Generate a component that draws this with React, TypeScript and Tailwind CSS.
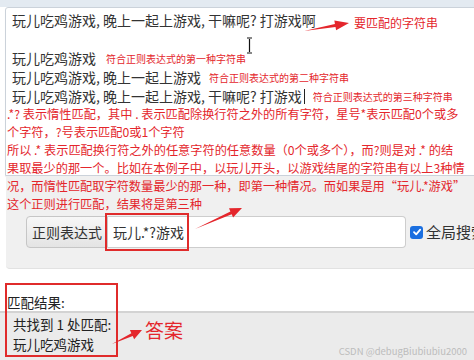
import React from 'react';

const RED = '#e4262c';

type Pt = [number, number];

// tapered annotation arrow, from tail a to tip b
function arrowPoints(a: Pt, b: Pt, head = 12, half = 5, neck = 1.6) {
  const dx = b[0] - a[0];
  const dy = b[1] - a[1];
  const len = Math.hypot(dx, dy);
  const ux = dx / len;
  const uy = dy / len;
  const nx = -uy;
  const ny = ux;
  const bx = b[0] - ux * head;
  const by = b[1] - uy * head;
  const pts: Pt[] = [
    a,
    [bx + nx * neck, by + ny * neck],
    [bx + nx * half, by + ny * half],
    b,
    [bx - nx * half, by - ny * half],
    [bx - nx * neck, by - ny * neck],
  ];
  return pts.map((p) => p.join(',')).join(' ');
}

const arrows: { from: Pt; to: Pt; head: number }[] = [
  { from: [304, 31], to: [349, 23], head: 14 },
  { from: [195, 229], to: [242, 208], head: 12 },
  { from: [112, 344], to: [142, 330], head: 11 },
];

const notes = [
  '.*? 表示惰性匹配，其中 . 表示匹配除换行符之外的所有字符，星号*表示匹配0个或多',
  '个字符，?号表示匹配0或1个字符',
  '所以 .* 表示匹配换行符之外的任意字符的任意数量（0个或多个），而?则是对 .* 的结',
  '果取最少的那一个。比如在本例子中，以玩儿开头，以游戏结尾的字符串有以上3种情',
  '况，而惰性匹配取字符数量最少的那一种，即第一种情况。而如果是用“玩儿.*游戏”',
  '这个正则进行匹配，结果将是第三种',
];

const Label: React.FC<{ className?: string; children: React.ReactNode }> = ({ className = '', children }) => (
  <span className={`text-[10px] leading-none text-[#e4262c] ${className}`}>{children}</span>
);

export default function App() {
  return (
    <div className="relative w-[474px] h-[360px] overflow-hidden bg-white text-[#333] font-['Noto_Sans_CJK_SC','Noto_Sans',sans-serif]">
      <div className="h-[7px] bg-[#e3eaf1]" />

      {/* text area */}
      <div className="ml-[5px] w-[480px] h-[169px] border border-[#cbd2da] rounded-tl-[3px] bg-white pl-[6px] pt-[3px] text-[14px] leading-[19px] shadow-[0_1px_1px_rgba(0,0,0,0.06)]">
        <div className="whitespace-nowrap">玩儿吃鸡游戏, 晚上一起上游戏, 干嘛呢? 打游戏啊</div>
        <div className="h-[19px]" />
        <div className="flex items-center whitespace-nowrap">
          玩儿吃鸡游戏
          <Label className="ml-[10px]">符合正则表达式的第一种字符串</Label>
        </div>
        <div className="flex items-center whitespace-nowrap">
          玩儿吃鸡游戏, 晚上一起上游戏
          <Label className="ml-[8px]">符合正则表达式的第二种字符串</Label>
        </div>
        <div className="flex items-center whitespace-nowrap">
          玩儿吃鸡游戏, 晚上一起上游戏, 干嘛呢? 打游戏
          <span className="ml-[2px] w-px h-[15px] bg-[#222]" />
          <Label className="ml-[8px]">符合正则表达式的第三种字符串</Label>
        </div>
      </div>

      {/* regex panel */}
      <div className="ml-[6px] w-[480px] h-[93px] bg-[#f0f0f0] border-b border-[#e2e2e2] rounded-bl-[4px] pl-[20px] pt-[40px]">
        <div className="flex items-center">
          <div className="shrink-0 whitespace-nowrap h-[32px] px-[5px] flex items-center border border-[#c6c6c6] rounded-l-[4px] bg-gradient-to-b from-[#f7f7f7] to-[#e4e4e4] text-[14px]">
            正则表达式
          </div>
          <div className="shrink-0 h-[32px] w-[298px] flex items-center border border-l-0 border-[#cdcdcd] rounded-r-[4px] bg-white pl-[5px] text-[14px] whitespace-nowrap">
            玩儿.*?游戏
          </div>
          <span className="shrink-0 ml-[4px] w-[13px] h-[13px] rounded-[3px] bg-[#1b6fe0] flex items-center justify-center">
            <svg width="10" height="10" viewBox="0 0 10 10">
              <path d="M2 5.2 L4.2 7.4 L8.2 2.6" fill="none" stroke="#fff" strokeWidth="1.8" strokeLinecap="round" strokeLinejoin="round" />
            </svg>
          </span>
          <span className="shrink-0 ml-[3px] text-[15px] whitespace-nowrap">全局搜索</span>
        </div>
      </div>

      {/* result */}
      <div className="h-[42px] pl-[7px] pt-[23px] text-[13.5px] leading-[20px] text-[#222]">匹配结果:</div>
      <div className="h-[49px] border-t-2 border-[#d3d3d3] bg-[#ebebeb] pl-[13px] pt-[1px] pr-[7px] flex justify-between">
        <div className="text-[13.5px] leading-[20px] text-[#222] whitespace-nowrap">
          <div>共找到 1 处匹配:</div>
          <div>玩儿吃鸡游戏</div>
        </div>
        <div className="self-end pb-[2px] text-[9.5px] text-[#bcbcbc] whitespace-nowrap">CSDN @debugBiubiubiu2000</div>
      </div>

      {/* annotations drawn over the screenshot */}
      <div className="absolute left-[7px] top-[105px] text-[12.2px] leading-[18px] text-[#e4262c] whitespace-nowrap">
        {notes.map((n, i) => (
          <div key={i}>{n}</div>
        ))}
      </div>
      <div className="absolute left-[354px] top-[14px] text-[12px] leading-[18px] text-[#e4262c]">要匹配的字符串</div>
      <div className="absolute left-[105px] top-[213px] w-[84px] h-[38px] border-2 border-[#e02b2b]" />
      <div className="absolute left-[5px] top-[283px] w-[113px] h-[74px] border-2 border-[#e02b2b]" />
      <div className="absolute left-[145px] top-[318px] text-[19px] leading-[24px] text-[#e4262c]">答案</div>

      <svg className="absolute inset-0 pointer-events-none" width="474" height="360">
        {arrows.map((a, i) => (
          <polygon key={i} points={arrowPoints(a.from, a.to, a.head)} fill={RED} />
        ))}
        {/* I-beam cursor */}
        <g stroke="#fff" strokeWidth="3" fill="none">
          <path d="M249.5 39 V52 M247 38 H252 M247 53 H252" />
        </g>
        <g stroke="#111" strokeWidth="1.2" fill="none">
          <path d="M249.5 39 V52 M247 38 H252 M247 53 H252" />
        </g>
      </svg>
    </div>
  );
}
